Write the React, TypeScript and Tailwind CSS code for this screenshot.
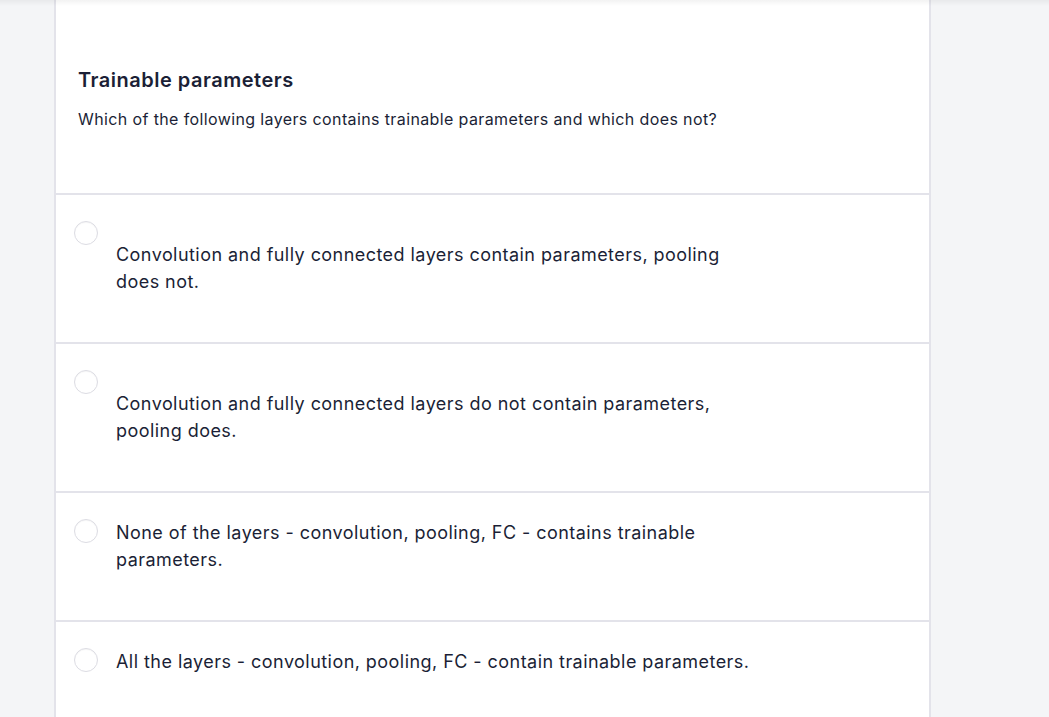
import React from 'react';

const options = [
  { text: 'Convolution and fully connected layers contain parameters, pooling does not.', offset: true },
  { text: 'Convolution and fully connected layers do not contain parameters, pooling does.', offset: true },
  { text: 'None of the layers - convolution, pooling, FC - contains trainable parameters.', offset: false },
  { text: 'All the layers - convolution, pooling, FC - contain trainable parameters.', offset: false },
];

export default function App() {
  return (
    <div
      className="relative h-[717px] overflow-hidden bg-[#f4f5f7] text-[#1b1f36]"
      style={{ fontFamily: 'Inter, "Noto Sans", sans-serif' }}
    >
      {/* header shadow */}
      <div className="absolute top-0 inset-x-0 h-[6px] bg-gradient-to-b from-black/5 to-transparent" />

      <div className="ml-[54px] w-[877px] min-h-[717px] border-x-2 border-[#e3e3ea] bg-white">
        {/* Question */}
        <div className="h-[193px] pt-[67px] pl-[22px]">
          <h2 className="text-[20px] font-semibold leading-[26px] tracking-[0.5px]">Trainable parameters</h2>
          <p className="mt-[14px] text-[16px] leading-[24px] tracking-[0.38px]">
            Which of the following layers contains trainable parameters and which does not?
          </p>
        </div>

        {options.map((opt, i) => (
          <div key={i} className="border-t-2 border-[#e3e3ea] pt-[26px] pb-[47px] pl-[18px] flex gap-[18px]">
            <div className="w-6 h-6 shrink-0 rounded-full border border-[#dcdce3] bg-white shadow-[inset_0_1px_1px_rgba(0,0,0,0.04)]" />
            <p className={`max-w-[640px] text-[18px] leading-[27px] tracking-[0.45px] ${opt.offset ? 'mt-[20px]' : 'mt-0'}`}>
              {opt.text}
            </p>
          </div>
        ))}
      </div>
    </div>
  );
}
